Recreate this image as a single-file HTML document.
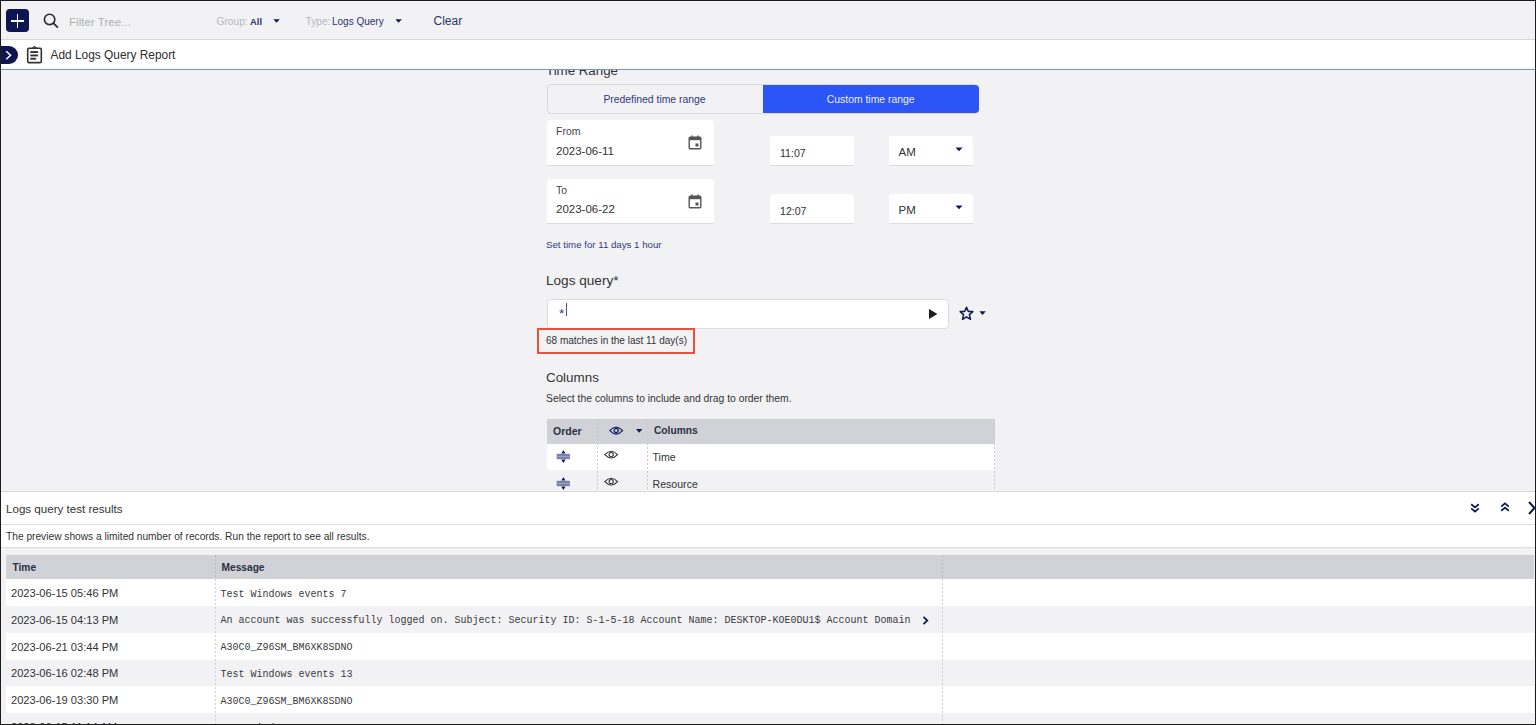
<!DOCTYPE html>
<html><head><meta charset="utf-8">
<style>
*{margin:0;padding:0;box-sizing:border-box}
html,body{width:1536px;height:725px;overflow:hidden;background:#f2f2f4;font-family:"Liberation Sans",sans-serif;color:#333}
.a{position:absolute}
.t{position:absolute;white-space:pre;line-height:1}
.nv{color:#2a3470}
#frame{position:absolute;left:0;top:0;width:1536px;height:725px;border:1px solid #1c1c1c;pointer-events:none;z-index:50}
</style></head><body>

<!-- main scroll area content (form) -->
<div class="t" style="left:546px;top:64.2px;font-size:13.3px;color:#333">Time Range</div>

<!-- segmented control -->
<div class="a" style="left:546.5px;top:84px;width:432.3px;height:29.7px;border:1px solid #d9d9de;border-radius:4px;background:#f2f2f4"></div>
<div class="a" style="left:762.7px;top:84.5px;width:216.1px;height:28.5px;background:#2b55f6;border-radius:0 4px 4px 0"></div>
<div class="t" style="left:546.5px;width:216px;text-align:center;top:94.9px;font-size:10.4px;color:#2e3a80">Predefined time range</div>
<div class="t" style="left:762.7px;width:216px;text-align:center;top:94.9px;font-size:10.4px;color:#e8ecff">Custom time range</div>

<!-- From row -->
<div class="a" style="left:546.5px;top:120px;width:167.5px;height:45.5px;background:#fff;border-bottom:1px solid #dcdce1;border-radius:4px 4px 0 0"></div>
<div class="t" style="left:556px;top:126px;font-size:10.5px;color:#444">From</div>
<div class="t" style="left:556px;top:145.5px;font-size:11.5px;color:#333">2023-06-11</div>
<svg class="a" style="left:688px;top:135px" width="14" height="15" viewBox="0 0 14 15"><rect x="1.2" y="2.2" width="11.6" height="11.6" rx="1" fill="none" stroke="#555" stroke-width="1.4"/><rect x="1.2" y="2.2" width="11.6" height="3" fill="#555"/><rect x="3.3" y="0.5" width="1.4" height="2.5" fill="#555"/><rect x="9.3" y="0.5" width="1.4" height="2.5" fill="#555"/><rect x="7.5" y="8.5" width="3" height="3" fill="#555"/></svg>
<div class="a" style="left:770.3px;top:135.5px;width:83.8px;height:30px;background:#fff;border-bottom:1px solid #dcdce1;border-radius:3px 3px 0 0"></div>
<div class="t" style="left:780px;top:147.9px;font-size:10.6px;color:#333">11:07</div>
<div class="a" style="left:889px;top:135.5px;width:84px;height:30px;background:#fff;border-bottom:1px solid #dcdce1;border-radius:3px 3px 0 0"></div>
<div class="t" style="left:898.5px;top:147px;font-size:11.5px;color:#333">AM</div>
<svg class="a" style="left:954.5px;top:147px" width="8" height="5"><path d="M0.5 0.5 L7.5 0.5 L4 4.2 Z" fill="#0f1a55"/></svg>

<!-- To row -->
<div class="a" style="left:546.5px;top:178.5px;width:167.5px;height:45.5px;background:#fff;border-bottom:1px solid #dcdce1;border-radius:4px 4px 0 0"></div>
<div class="t" style="left:556px;top:184.5px;font-size:10.5px;color:#444">To</div>
<div class="t" style="left:556px;top:204px;font-size:11.5px;color:#333">2023-06-22</div>
<svg class="a" style="left:688px;top:193.5px" width="14" height="15" viewBox="0 0 14 15"><rect x="1.2" y="2.2" width="11.6" height="11.6" rx="1" fill="none" stroke="#555" stroke-width="1.4"/><rect x="1.2" y="2.2" width="11.6" height="3" fill="#555"/><rect x="3.3" y="0.5" width="1.4" height="2.5" fill="#555"/><rect x="9.3" y="0.5" width="1.4" height="2.5" fill="#555"/><rect x="7.5" y="8.5" width="3" height="3" fill="#555"/></svg>
<div class="a" style="left:770.3px;top:193.7px;width:83.8px;height:30px;background:#fff;border-bottom:1px solid #dcdce1;border-radius:3px 3px 0 0"></div>
<div class="t" style="left:780px;top:206.1px;font-size:10.6px;color:#333">12:07</div>
<div class="a" style="left:889px;top:193.7px;width:84px;height:30px;background:#fff;border-bottom:1px solid #dcdce1;border-radius:3px 3px 0 0"></div>
<div class="t" style="left:898.5px;top:205.2px;font-size:11.5px;color:#333">PM</div>
<svg class="a" style="left:954.5px;top:205.2px" width="8" height="5"><path d="M0.5 0.5 L7.5 0.5 L4 4.2 Z" fill="#0f1a55"/></svg>

<div class="t" style="left:546px;top:240.2px;font-size:9.7px;color:#2e3a80">Set time for 11 days 1 hour</div>

<div class="t" style="left:546px;top:274.3px;font-size:13.6px;color:#333">Logs query*</div>
<div class="a" style="left:546.8px;top:299px;width:402px;height:29.8px;background:#fff;border:1px solid #dcdce1;border-radius:4px"></div>
<div class="t" style="left:559px;top:306.5px;font-size:13.5px;color:#2e3a80">*</div>
<div class="a" style="left:565.5px;top:303px;width:1px;height:13px;background:#555"></div>
<svg class="a" style="left:929px;top:309px" width="9" height="10"><path d="M0 0 L8.4 5 L0 10 Z" fill="#1c1c1c"/></svg>
<svg class="a" style="left:958.5px;top:306px" width="15" height="15" viewBox="0 0 15 15"><path d="M7.5 1.2 L9.3 5.4 L13.8 5.6 L10.4 8.6 L11.5 13.3 L7.5 10.8 L3.5 13.3 L4.6 8.6 L1.2 5.6 L5.7 5.4 Z" fill="none" stroke="#0f1a55" stroke-width="1.5" stroke-linejoin="round"/></svg>
<svg class="a" style="left:979px;top:311px" width="8" height="5"><path d="M0.3 0.3 L6.8 0.3 L3.55 4 Z" fill="#0f1a55"/></svg>

<div class="a" style="left:537.4px;top:327.8px;width:157.3px;height:26px;border:2px solid #e9513c"></div>
<div class="t" style="left:546px;top:336.4px;font-size:10px;color:#333">68 matches in the last 11 day(s)</div>

<div class="t" style="left:546px;top:370.5px;font-size:13.4px;color:#333">Columns</div>
<div class="t" style="left:546px;top:394.1px;font-size:10.35px;color:#333">Select the columns to include and drag to order them.</div>

<!-- columns table -->
<div class="a" style="left:546.5px;top:418.5px;width:448px;height:25px;background:#d1d2d7"></div>
<div class="a" style="left:546.5px;top:443.5px;width:448px;height:26.5px;background:#fff"></div>
<div class="a" style="left:597px;top:418.5px;width:1px;height:73px;background:repeating-linear-gradient(to bottom,#c9cacf 0 2.5px,transparent 2.5px 4px)"></div>
<div class="a" style="left:647px;top:418.5px;width:1px;height:73px;background:repeating-linear-gradient(to bottom,#c9cacf 0 2.5px,transparent 2.5px 4px)"></div>
<div class="a" style="left:994px;top:418.5px;width:1px;height:73px;background:repeating-linear-gradient(to bottom,#c9cacf 0 2.5px,transparent 2.5px 4px)"></div>
<div class="t" style="left:553px;top:426px;font-size:10.5px;font-weight:700;color:#2b2f45">Order</div>
<svg class="a" style="left:608.5px;top:426px" width="15" height="10" viewBox="0 0 15 10"><path d="M0.8 4.6 Q7.2 -2.2 13.6 4.6 Q7.2 11.4 0.8 4.6 Z" fill="none" stroke="#1c2570" stroke-width="1.3"/><circle cx="7.2" cy="4.6" r="2.1" fill="none" stroke="#1c2570" stroke-width="1.3"/></svg>
<svg class="a" style="left:636px;top:429px" width="7" height="4"><path d="M0 0 L6.4 0 L3.2 3.8 Z" fill="#0f1a55"/></svg>
<div class="t" style="left:654px;top:426.2px;font-size:10.2px;font-weight:700;color:#2b2f45">Columns</div>
<svg class="a" style="left:556px;top:450.3px" width="15" height="14" viewBox="0 0 15 14"><path d="M5.2 3.6 L7.4 0.3 L9.6 3.6 Z M5.2 9.6 L7.4 12.9 L9.6 9.6 Z" fill="#0f1a55"/><rect x="0.7" y="3.8" width="13.2" height="5.4" fill="#7b82aa"/><rect x="0.7" y="6.1" width="13.2" height="0.9" fill="#a3a8c6"/></svg>
<svg class="a" style="left:603.5px;top:450.3px" width="15" height="10" viewBox="0 0 15 10"><path d="M0.8 4.6 Q7.2 -2.2 13.6 4.6 Q7.2 11.4 0.8 4.6 Z" fill="none" stroke="#333" stroke-width="1.1"/><circle cx="7.2" cy="4.6" r="2.1" fill="none" stroke="#333" stroke-width="1.1"/></svg>
<div class="t" style="left:652.5px;top:452px;font-size:10.6px;color:#333">Time</div>
<svg class="a" style="left:556px;top:477.1px" width="15" height="14" viewBox="0 0 15 14"><path d="M5.2 3.6 L7.4 0.3 L9.6 3.6 Z M5.2 9.6 L7.4 12.9 L9.6 9.6 Z" fill="#0f1a55"/><rect x="0.7" y="3.8" width="13.2" height="5.4" fill="#7b82aa"/><rect x="0.7" y="6.1" width="13.2" height="0.9" fill="#a3a8c6"/></svg>
<svg class="a" style="left:603.5px;top:477.1px" width="15" height="10" viewBox="0 0 15 10"><path d="M0.8 4.6 Q7.2 -2.2 13.6 4.6 Q7.2 11.4 0.8 4.6 Z" fill="none" stroke="#333" stroke-width="1.1"/><circle cx="7.2" cy="4.6" r="2.1" fill="none" stroke="#333" stroke-width="1.1"/></svg>
<div class="t" style="left:652.5px;top:478.8px;font-size:10.6px;color:#333">Resource</div>

<!-- HEADER (top bars) -->
<div class="a" style="left:0;top:0;width:1536px;height:40px;background:#f2f2f4;border-bottom:1px solid #d8d8dd;z-index:10">
</div>
<div class="a" style="left:0;top:40px;width:1536px;height:30px;background:#fff;border-bottom:1.5px solid #7090f7;z-index:10"></div>
<div class="a" style="left:0;top:0;width:1536px;height:72px;z-index:11">
  <div class="a" style="left:6px;top:9px;width:23px;height:23px;background:#0d1650;border-radius:4px"></div>
  <div class="a" style="left:11px;top:20.2px;width:13.2px;height:1.5px;background:#fff"></div>
  <div class="a" style="left:16.8px;top:14px;width:1.5px;height:13.5px;background:#fff"></div>
  <svg class="a" style="left:42px;top:12px" width="17" height="17" viewBox="0 0 17 17"><circle cx="7.6" cy="7.4" r="5.2" fill="none" stroke="#2a2a2a" stroke-width="1.6"/><path d="M11.3 11.2 L15.4 15.2" stroke="#2a2a2a" stroke-width="1.7" stroke-linecap="round"/></svg>
  <div class="t" style="left:69px;top:15.9px;font-size:11.6px;color:#b0b0b5">Filter Tree...</div>
  <div class="t" style="left:216.5px;top:16.7px;font-size:10.2px;color:#b6b8c4">Group:</div>
  <div class="t" style="left:250px;top:16.7px;font-size:9.4px;font-weight:700;color:#2a3470">All</div>
  <svg class="a" style="left:273px;top:18.8px" width="8" height="5"><path d="M0.4 0.3 L6.8 0.3 L3.6 3.7 Z" fill="#0f1a55"/></svg>
  <div class="t" style="left:305.5px;top:16.7px;font-size:10.2px;color:#b6b8c4">Type:</div>
  <div class="t" style="left:332px;top:16.7px;font-size:10px;color:#2a3470">Logs Query</div>
  <svg class="a" style="left:395px;top:18.8px" width="8" height="5"><path d="M0.4 0.3 L6.8 0.3 L3.6 3.7 Z" fill="#0f1a55"/></svg>
  <div class="t" style="left:433.5px;top:14.8px;font-size:12px;color:#2a3470">Clear</div>

  <div class="a" style="left:0;top:46px;width:18px;height:18px;background:#0d1650;border-radius:0 9px 9px 0"></div>
  <svg class="a" style="left:0;top:46px" width="18" height="18"><path d="M6.2 5.2 L10.6 9.2 L6.2 13.2" fill="none" stroke="#fff" stroke-width="1.5"/></svg>
  <svg class="a" style="left:26px;top:46px" width="17" height="18" viewBox="0 0 17 18"><rect x="1.7" y="2.2" width="13.6" height="14.4" rx="1.2" fill="none" stroke="#333" stroke-width="1.6"/><path d="M6 2.5 L8.5 0.6 L11 2.5" fill="none" stroke="#333" stroke-width="1.2"/><rect x="4.3" y="5.1" width="7.8" height="1.9" fill="#333"/><rect x="4.3" y="8.5" width="7.8" height="1.9" fill="#333"/><rect x="4.3" y="11.8" width="5.8" height="1.9" fill="#333"/></svg>
  <div class="t" style="left:50.5px;top:50px;font-size:11.9px;color:#2d2d2d">Add Logs Query Report</div>
</div>

<!-- BOTTOM PANEL -->
<div class="a" style="left:0;top:491px;width:1536px;height:234px;background:#f2f2f4;border-top:1px solid #d8d8dd;z-index:20">
  <div class="a" style="left:0;top:0;width:1536px;height:56px;background:#fff"></div>
  <div class="a" style="left:0;top:32px;width:1536px;height:1px;background:#dcdce1"></div>
  <div class="a" style="left:0;top:55px;width:1536px;height:1px;background:#dcdce1"></div>
  <div class="t" style="left:6px;top:10.9px;font-size:11.6px;color:#333">Logs query test results</div>
  <svg class="a" style="left:1470px;top:11px" width="10" height="10" viewBox="0 0 10 10"><path d="M1.2 1.2 L5 4.4 L8.8 1.2 M1.2 5.4 L5 8.6 L8.8 5.4" fill="none" stroke="#0f1a55" stroke-width="1.8"/></svg>
  <svg class="a" style="left:1500px;top:10.2px" width="10" height="10" viewBox="0 0 10 10"><path d="M1.2 4.6 L5 1.4 L8.8 4.6 M1.2 8.8 L5 5.6 L8.8 8.8" fill="none" stroke="#0f1a55" stroke-width="1.8"/></svg>
  <svg class="a" style="left:1527px;top:8.8px" width="10" height="14" viewBox="0 0 10 14"><path d="M2 1 L7.5 7 L2 13" fill="none" stroke="#0f1a55" stroke-width="2"/></svg>
  <div class="t" style="left:6px;top:39.8px;font-size:10.2px;color:#333">The preview shows a limited number of records. Run the report to see all results.</div>

  <!-- results table -->
  <div class="a" style="left:6px;top:62.80px;width:1527.5px;height:24.50px;background:#d1d2d7"></div>
  <div class="t" style="left:12.5px;top:71.17px;font-size:10.2px;font-weight:700;color:#2b2f45">Time</div>
  <div class="t" style="left:221.5px;top:71.17px;font-size:10.2px;font-weight:700;color:#2b2f45">Message</div>
  <div class="a" style="left:6px;top:87.30px;width:1527.5px;height:26.75px;background:#fff"></div>
  <div class="t" style="left:11px;top:96.20px;font-size:11.1px;color:#333">2023-06-15 05:46 PM</div>
  <div class="t" style="left:220.5px;top:97.54px;font-family:'Liberation Mono',monospace;font-size:10px;color:#3a3a3a">Test Windows events 7</div>
  <div class="a" style="left:6px;top:114.05px;width:1527.5px;height:26.75px;background:#f2f2f4"></div>
  <div class="t" style="left:11px;top:122.95px;font-size:11.1px;color:#333">2023-06-15 04:13 PM</div>
  <div class="t" style="left:220.5px;top:124.29px;font-family:'Liberation Mono',monospace;font-size:10px;color:#3a3a3a">An account was successfully logged on. Subject: Security ID: S-1-5-18 Account Name: DESKTOP-KOE0DU1$ Account Domain</div>
  <svg class="a" style="left:921.5px;top:123.55px" width="7" height="9" viewBox="0 0 7 9"><path d="M1.5 0.8 L5.3 4.5 L1.5 8.2" fill="none" stroke="#0f1a55" stroke-width="1.8"/></svg>
  <div class="a" style="left:6px;top:140.80px;width:1527.5px;height:26.75px;background:#fff"></div>
  <div class="t" style="left:11px;top:149.70px;font-size:11.1px;color:#333">2023-06-21 03:44 PM</div>
  <div class="t" style="left:220.5px;top:151.04px;font-family:'Liberation Mono',monospace;font-size:10px;color:#3a3a3a">A30C0_Z96SM_BM6XK8SDNO</div>
  <div class="a" style="left:6px;top:167.55px;width:1527.5px;height:26.75px;background:#f2f2f4"></div>
  <div class="t" style="left:11px;top:176.45px;font-size:11.1px;color:#333">2023-06-16 02:48 PM</div>
  <div class="t" style="left:220.5px;top:177.79px;font-family:'Liberation Mono',monospace;font-size:10px;color:#3a3a3a">Test Windows events 13</div>
  <div class="a" style="left:6px;top:194.30px;width:1527.5px;height:26.75px;background:#fff"></div>
  <div class="t" style="left:11px;top:203.20px;font-size:11.1px;color:#333">2023-06-19 03:30 PM</div>
  <div class="t" style="left:220.5px;top:204.54px;font-family:'Liberation Mono',monospace;font-size:10px;color:#3a3a3a">A30C0_Z96SM_BM6XK8SDNO</div>
  <div class="a" style="left:6px;top:221.05px;width:1527.5px;height:26.75px;background:#f2f2f4"></div>
  <div class="t" style="left:11px;top:230.25px;font-size:11.1px;color:#333">2023-06-15 11:14 AM</div>
  <div class="t" style="left:220.5px;top:232.19px;font-family:'Liberation Mono',monospace;font-size:10px;color:#3a3a3a">Test Windows events 5</div>
  <div class="a" style="left:215px;top:62.80px;width:1px;height:24.50px;background:repeating-linear-gradient(to bottom,#b9bac0 0 2.5px,transparent 2.5px 4px);z-index:2"></div>
  <div class="a" style="left:215px;top:87.30px;width:1px;height:145.7px;background:repeating-linear-gradient(to bottom,#cfd0d5 0 2.5px,transparent 2.5px 4px);z-index:2"></div>
  <div class="a" style="left:942.3px;top:62.80px;width:1px;height:24.50px;background:repeating-linear-gradient(to bottom,#b9bac0 0 2.5px,transparent 2.5px 4px);z-index:2"></div>
  <div class="a" style="left:942.3px;top:87.30px;width:1px;height:145.7px;background:repeating-linear-gradient(to bottom,#cfd0d5 0 2.5px,transparent 2.5px 4px);z-index:2"></div>
</div>

<div id="frame"></div>
</body></html>
